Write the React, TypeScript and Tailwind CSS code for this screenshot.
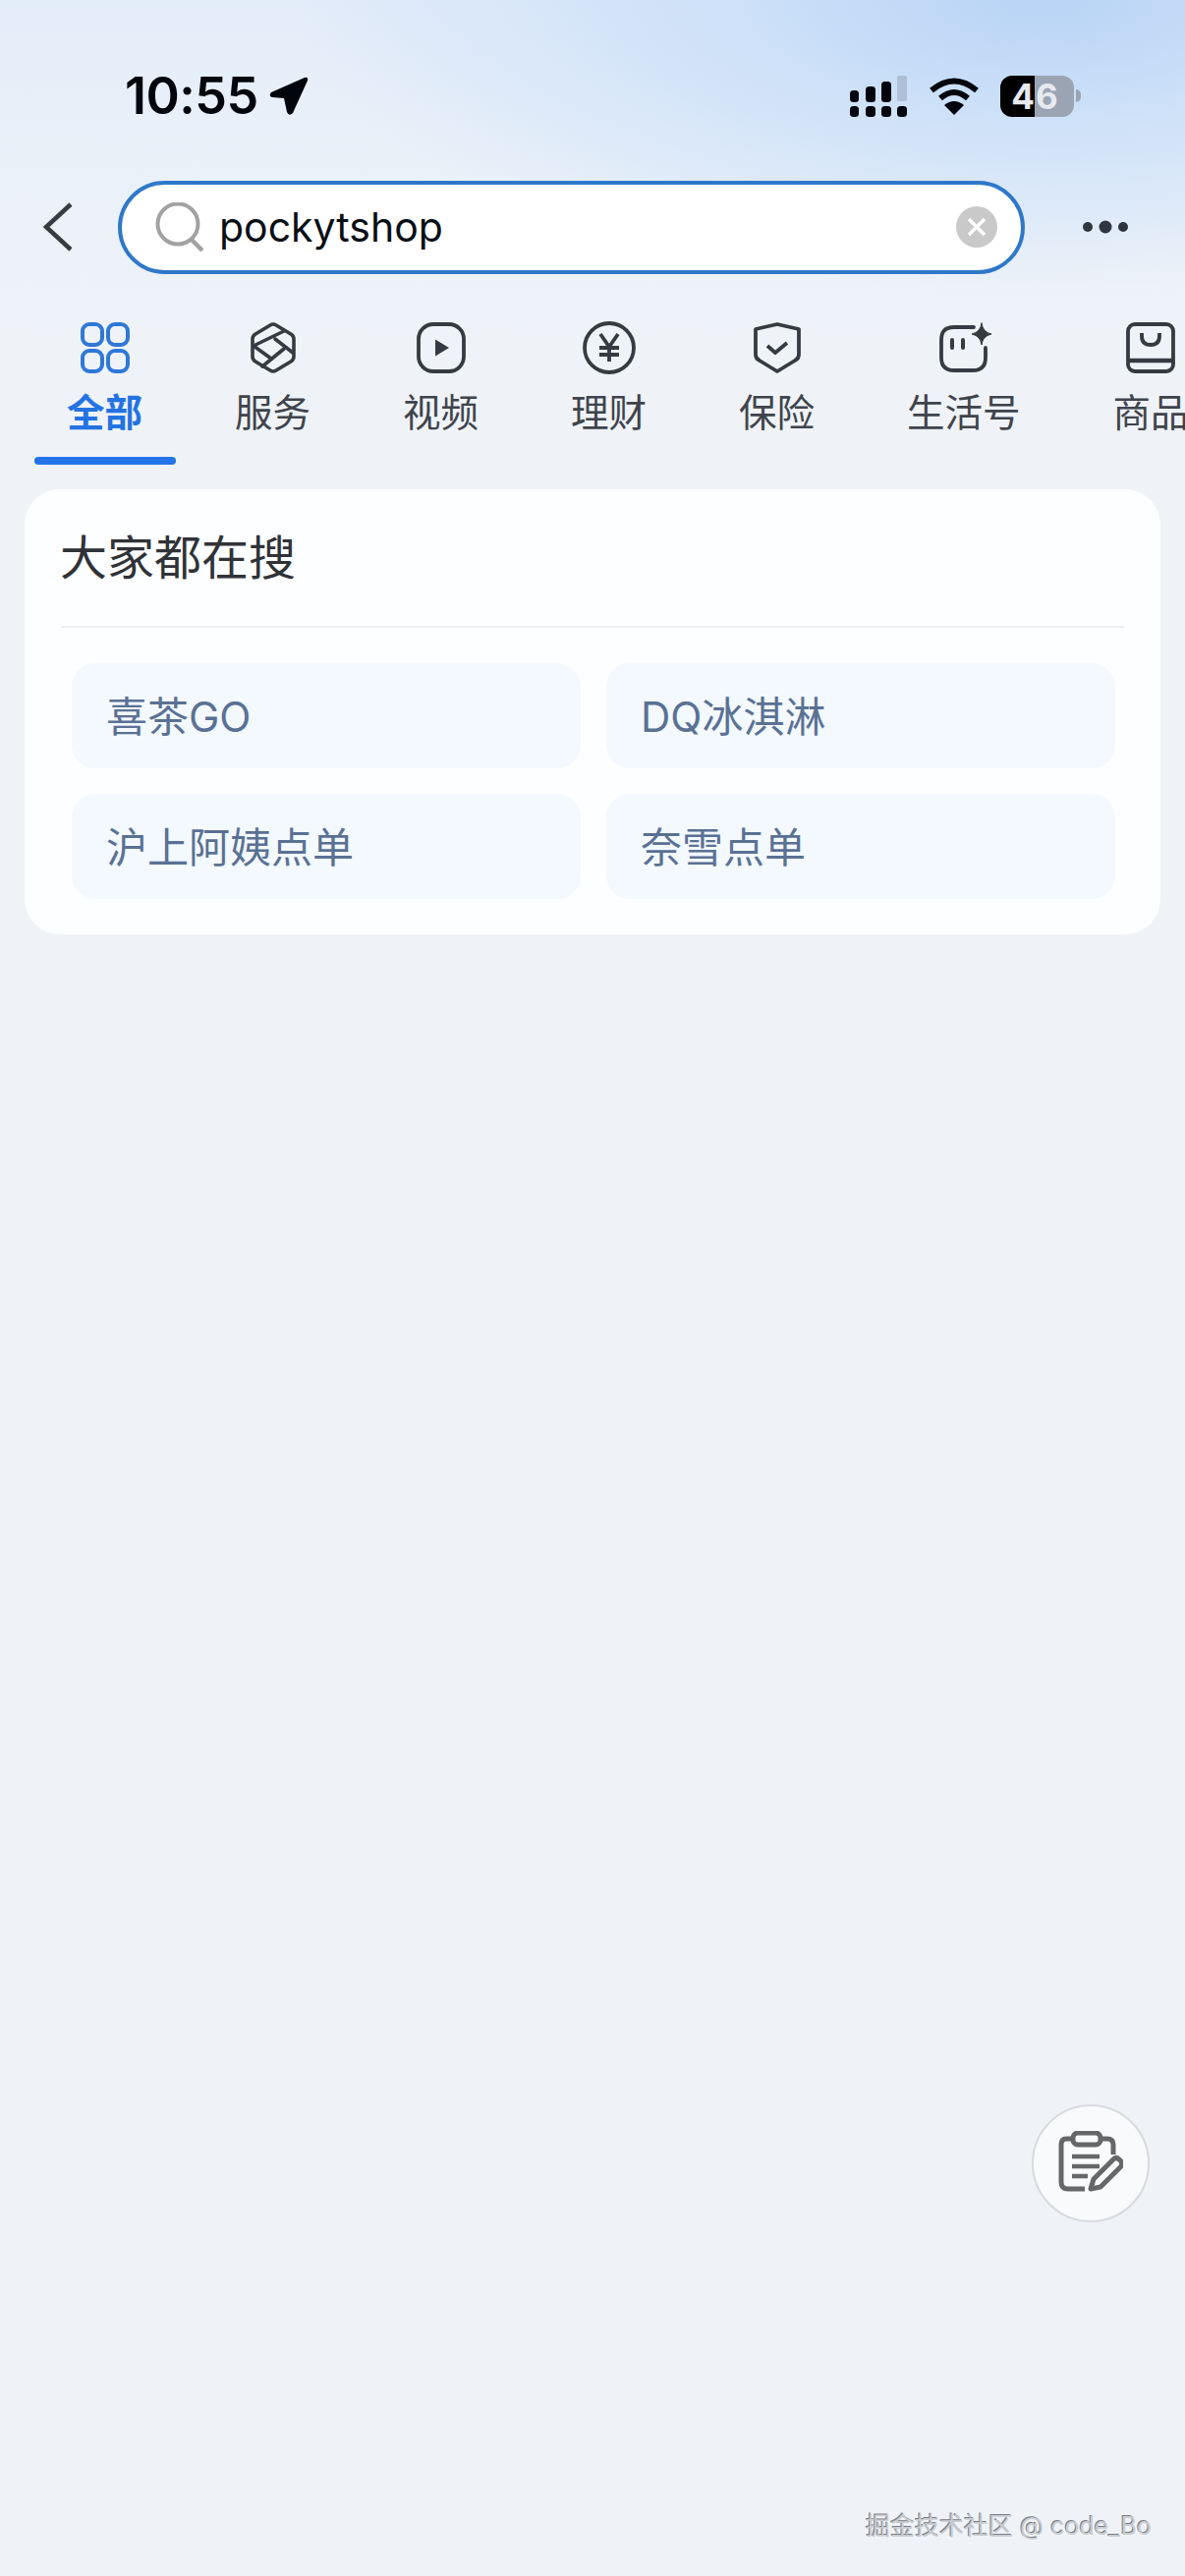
const cjk = 'font-["Inter","Noto_Sans_CJK_SC",sans-serif]';

function GridIcon() {
  return (
    <svg width="50" height="52" viewBox="0 0 50 52" fill="none" stroke="#2f78d8" strokeWidth="4">
      <rect x="2" y="2" width="20" height="21" rx="7" />
      <rect x="28" y="2" width="20" height="21" rx="7" />
      <rect x="2" y="29" width="20" height="21" rx="7" />
      <rect x="28" y="29" width="20" height="21" rx="7" />
    </svg>
  );
}
function ServiceIcon() {
  return (
    <svg width="50" height="52" viewBox="0 0 50 52" fill="none" stroke="#363b43" strokeWidth="3.6" strokeLinejoin="round" strokeLinecap="round">
      <path d="M22 3 Q25 1 28 3 L43 12 Q46 14 46 17 V35 Q46 38 43 40 L28 49 Q25 51 22 49 L7 40 Q4 38 4 35 V17 Q4 14 7 12 Z" />
      <path d="M36 9 L5 24 L23 37" />
      <path d="M27 17 L45 31" />
      <path d="M36 27 L14 45" />
    </svg>
  );
}
function PlayIcon() {
  return (
    <svg width="50" height="52" viewBox="0 0 50 52" fill="none">
      <rect x="2" y="2" width="46" height="48" rx="15" stroke="#363b43" strokeWidth="3.8" />
      <path d="M19 17.5 L33 26 L19 34.5 Z" fill="#363b43" />
    </svg>
  );
}
function YenIcon() {
  return (
    <svg width="54" height="54" viewBox="0 0 54 54" fill="none" stroke="#363b43" strokeWidth="3.8">
      <circle cx="27" cy="27" r="25" />
      <path d="M18 13 L27 26 L36 13 M27 26 V41 M17 27 H37 M17 34 H37" />
    </svg>
  );
}
function ShieldIcon() {
  return (
    <svg width="50" height="52" viewBox="0 0 50 52" fill="none" stroke="#363b43" strokeWidth="3.8" strokeLinejoin="round">
      <path d="M25 2 L47 7 V33 Q47 37 43 39 L25 50 L7 39 Q3 37 3 33 V7 Z" />
      <path d="M15 24 L23 31 L35 21" />
    </svg>
  );
}
function FaceIcon() {
  return (
    <svg width="56" height="52" viewBox="0 0 56 52" fill="none" stroke="#363b43" strokeLinecap="round">
      <path d="M38 5 H18 Q5 5 5 18 V36 Q5 49 18 49 H37 Q50 49 50 36 V26" strokeWidth="3.8" />
      <path d="M16 18 V26 M27 18 V26" strokeWidth="4" />
      <path d="M46 1 Q47 10 56 12 Q47 14 46 23 Q45 14 36 12 Q45 10 46 1 Z" fill="#363b43" strokeWidth="1" />
    </svg>
  );
}
function BagIcon() {
  return (
    <svg width="50" height="52" viewBox="0 0 50 52" fill="none" stroke="#363b43" strokeWidth="3.8">
      <rect x="2" y="2" width="46" height="48" rx="7" />
      <path d="M2 39 H48" strokeWidth="4.4" />
      <path d="M16 11 V14 Q16 23 25 23 Q34 23 34 14 V11" />
    </svg>
  );
}

const tabs = [
  { label: "服务", icon: <ServiceIcon /> },
  { label: "视频", icon: <PlayIcon /> },
  { label: "理财", icon: <YenIcon /> },
  { label: "保险", icon: <ShieldIcon /> },
  { label: "生活号", icon: <FaceIcon /> },
  { label: "商品", icon: <BagIcon /> },
];

const chips = ["喜茶GO", "DQ冰淇淋", "沪上阿姨点单", "奈雪点单"];

export default function App() {
  return (
    <div
      className={`relative w-[1206px] h-[2622px] overflow-hidden bg-[#eff3f8] ${cjk} bg-[radial-gradient(ellipse_760px_300px_at_88%_0%,#b9d4f6_0%,rgba(200,222,248,0.75)_45%,rgba(239,243,248,0)_100%),linear-gradient(180deg,#e3ecf9_0px,#e9f0f9_130px,#eff3f8_340px)]`}
    >
      {/* status bar */}
      <div className="flex h-[183px] items-start justify-between pl-[127px] pr-[106px] pt-[77px]">
        <div className="flex items-center gap-[11px]">
          <span className="text-[52px] leading-[42px] font-semibold tracking-[-0.5px] text-[#02060c]">10:55</span>
          <svg width="40" height="40" viewBox="0 0 40 40" fill="#02060c">
            <path d="M2 16 Q-1 20 3 21 L15 22 L18 36 Q20 41 24 37 L39 4 Q40 0 36 1 Z" />
          </svg>
        </div>
        <div className="flex items-start">
          <svg width="58" height="42" viewBox="0 0 58 42" fill="#02060c">
            <rect x="0" y="15" width="9" height="12" rx="3.5" />
            <rect x="16" y="11" width="10" height="16" rx="3.5" />
            <rect x="32" y="6" width="10" height="21" rx="3.5" />
            <rect x="48" y="0" width="10" height="26" rx="2" fill="#afbfd6" />
            <rect x="0" y="31" width="9" height="11" rx="3.5" />
            <rect x="16" y="31" width="10" height="11" rx="3.5" />
            <rect x="32" y="31" width="10" height="11" rx="3.5" />
            <rect x="48" y="31" width="10" height="11" rx="3.5" />
          </svg>
          <svg className="ml-[22px] mt-[2px]" width="52" height="38" viewBox="0 0 52 38" fill="none" stroke="#02060c" strokeWidth="6">
            <path d="M3 13 Q26 -6 49 13" />
            <path d="M12 21 Q26 9 40 21" />
            <path d="M26 38 L16 28 Q26 20 36 28 Z" fill="#02060c" stroke="none" />
          </svg>
          <div className="ml-[21px] flex h-[42px] w-[75px] overflow-hidden rounded-[12px] text-[35px] leading-[42px] font-bold text-[#e6e9f0]">
            <span className="flex w-[35px] justify-end bg-black">4</span>
            <span className="w-[40px] bg-[#9ba4b3] pl-[1px]">6</span>
          </div>
          <div className="ml-[2px] mt-[14px] h-[13px] w-[5px] rounded-r-full bg-[#9ba4b3]" />
        </div>
      </div>

      {/* search row */}
      <div className="flex h-[96px] items-center">
        <svg className="ml-[42px]" width="34" height="50" viewBox="0 0 34 50" fill="none" stroke="#373c44" strokeWidth="4.5">
          <path d="M30 2 L5 25 L30 48" />
        </svg>
        <div className="ml-[44px] flex h-[95px] w-[923px] items-center rounded-full border-[4px] border-[#2f78c9] bg-white pl-[34px] pr-[24px]">
          <svg width="50" height="50" viewBox="0 0 50 50" fill="none" stroke="#a2a2a2" strokeWidth="4">
            <circle cx="23" cy="22" r="20.5" />
            <path d="M37 38 L48 49" strokeWidth="4.5" />
          </svg>
          <span className="ml-[15px] text-[41px] leading-none text-[#0a0f16]">pockytshop</span>
          <div className="ml-auto flex h-[42px] w-[42px] items-center justify-center rounded-full bg-[#c9c9c9]">
            <svg width="22" height="22" viewBox="0 0 22 22" stroke="#fff" strokeWidth="3.4">
              <path d="M3 3 L19 19 M19 3 L3 19" />
            </svg>
          </div>
        </div>
        <svg className="ml-[59px]" width="46" height="16" viewBox="0 0 46 16" fill="#2f3640">
          <circle cx="5" cy="8" r="5" />
          <circle cx="23" cy="8" r="6.5" />
          <circle cx="41" cy="8" r="5" />
        </svg>
      </div>

      {/* tabs */}
      <div className="flex pl-[21px] pt-[49px]">
        <div className="flex w-[171px] shrink-0 flex-col items-center">
          <div className="flex h-[52px] items-center"><GridIcon /></div>
          <div className="mt-[20px] text-[38.5px] leading-[40px] font-bold text-[#2473e2]">全部</div>
          <div className="mt-[25px] h-[8px] w-[144px] rounded-full bg-[#2473e8]" />
        </div>
        {tabs.map((t) => (
          <div key={t.label} className="flex shrink-0 flex-col items-center px-[47px]">
            <div className="flex h-[52px] items-center">{t.icon}</div>
            <div className="mt-[20px] whitespace-nowrap text-[38.5px] leading-[40px] text-[#3f444c]">{t.label}</div>
          </div>
        ))}
      </div>

      {/* card */}
      <div className="mx-[25px] mt-[25px] h-[453px] rounded-[36px] bg-[#fdfeff] px-[37px]">
        <div className="flex h-[141px] items-center border-b-2 border-[#eceef2] text-[48px] leading-none text-[#2f3237]">
          <span className="-ml-[1px]">大家都在搜</span>
        </div>
        <div className="mt-[36px] grid grid-cols-2 gap-[26px] pl-[11px] pr-[9px]">
          {chips.map((c) => (
            <div key={c} className="flex h-[107px] items-center rounded-[24px] bg-[#f3f9fe] pl-[35px] pt-[2px] text-[42px] leading-none text-[#5a7194]">
              {c}
            </div>
          ))}
        </div>
      </div>

      {/* floating button */}
      <div className="absolute left-[1050px] top-[2142px] flex h-[120px] w-[120px] items-center justify-center rounded-full border-2 border-[#d8dadd] bg-[#f9fafc]">
        <svg width="66" height="66" viewBox="0 0 66 66" fill="none" stroke="#666769" strokeWidth="5" strokeLinejoin="round">
          <path d="M14 8 H8 Q3 8 3 14 V52 Q3 59 10 59 H27" />
          <path d="M44 8 H50 Q56 8 56 14 V24" />
          <rect x="15" y="2" width="28" height="12" rx="5" />
          <path d="M14 26 H42 M14 36 H42 M14 46 H30" strokeWidth="4.6" />
          <path d="M33 59 L36 49 L56 29 Q59 26 62 29 L64 31 Q66 34 63 37 L43 57 Z" />
        </svg>
      </div>

      {/* watermark */}
      <div className="absolute left-[881px] top-[2555px] whitespace-nowrap text-[25px] leading-[32px] text-[#c8cbd0] [text-shadow:-1px_-1px_0_#7c7f85]">
        掘金技术社区 @ code_Bo
      </div>
    </div>
  );
}
